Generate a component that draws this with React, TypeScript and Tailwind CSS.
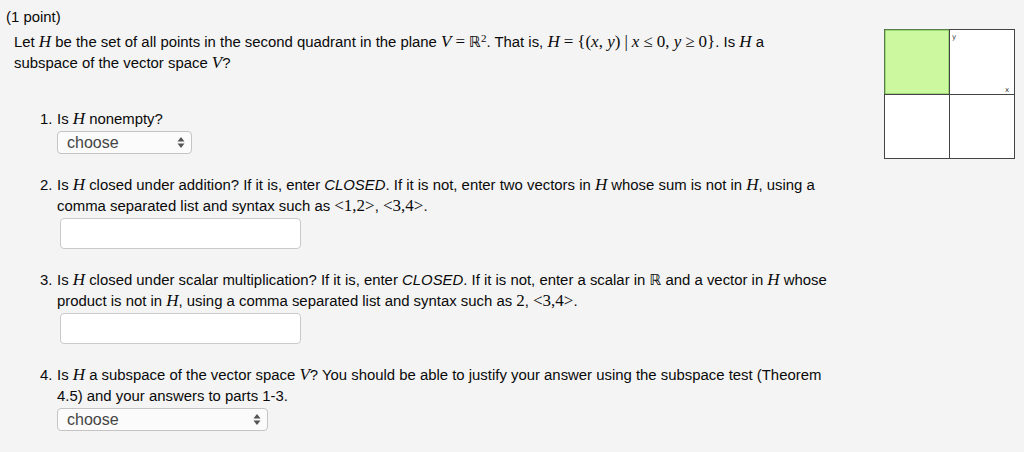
import { ReactNode } from 'react';

const M = ({ children }: { children: ReactNode }) => (
    <span className="font-['Liberation_Serif',serif] italic text-[17px] leading-none">{children}</span>
);

const R = ({ children }: { children: ReactNode }) => (
    <span className="font-['Liberation_Serif',serif] text-[17px] leading-none">{children}</span>
);

// relation symbols get a bit of room on both sides, as in typeset math
const Rel = ({ children }: { children: ReactNode }) => (
    <span className="font-['Liberation_Serif',serif] text-[17px] leading-none mx-[4px]">{children}</span>
);

const BB = () => <span className="font-['DejaVu_Sans',sans-serif] text-[15px] leading-none">ℝ</span>;

const Choose = ({ width }: { width: string }) => (
    <div className={`${width} h-[23px] mt-[1px] flex items-center justify-between pl-[9px] pr-[6px] bg-[#fbfbfb] border border-[#c4c4c4] rounded-[4px]`}>
        <span className="text-[16px] text-[#444] leading-none">choose</span>
        <svg width="8" height="13" viewBox="0 0 8 13">
            <path d="M4 1 L7.5 5.5 L0.5 5.5 Z" fill="#555" />
            <path d="M4 12 L7.5 7.5 L0.5 7.5 Z" fill="#555" />
        </svg>
    </div>
);

const Answer = () => (
    <div className="ml-[3px] mt-[1px] w-[241px] h-[31px] bg-white border border-[#cacaca] rounded-[4px]" />
);

const Item = ({ n, children }: { n: number; children: ReactNode }) => (
    <div className="flex">
        <span className="w-[17px] shrink-0">{n}.</span>
        <div className="flex flex-col">{children}</div>
    </div>
);

const Graph = () => (
    <svg width="131" height="131" viewBox="0 0 131 131" className="shrink-0">
        <rect x="0.5" y="0.5" width="130" height="129" fill="#fff" stroke="#444" />
        <rect x="1" y="1" width="64" height="64" fill="#ccf9a0" stroke="#6fb84f" />
        <line x1="65.5" y1="0" x2="65.5" y2="130" stroke="#444" />
        <line x1="0" y1="65.5" x2="131" y2="65.5" stroke="#444" />
        <text x="68" y="10" fontSize="7" fill="#333" fontFamily="DejaVu Sans">y</text>
        <text x="121" y="63" fontSize="7" fill="#333" fontFamily="DejaVu Sans">x</text>
    </svg>
);

export default function App() {
    return (
        <div className="w-[1024px] h-[452px] bg-[#f4f4f4] text-[#0a0a0a] font-['Liberation_Sans',Arial,sans-serif] text-[14.9px] leading-[21px] flex justify-between">
            <div className="pt-[7px] pl-[6px]">
                <div>(1 point)</div>
                <div className="pl-[8px] pt-[4px]">
                    <p>
                        Let <M>H</M> be the set of all points in the second quadrant in the plane <M>V</M><Rel>=</Rel><BB /><sup className="font-['Liberation_Serif',serif] text-[11px] leading-none">2</sup>. That is, <M>H</M><Rel>=</Rel><R>{'{'}(<i>x</i>, <i>y</i>)</R><Rel>|</Rel><R><i>x</i></R><Rel>≤</Rel><R>0, <i>y</i></R><Rel>≥</Rel><R>0{'}'}</R>. Is <M>H</M> a
                        <br />
                        subspace of the vector space <M>V</M>?
                    </p>
                    <div className="pl-[26px] pt-[35px] flex flex-col gap-[21px]">
                        <Item n={1}>
                            <div>Is <M>H</M> nonempty?</div>
                            <Choose width="w-[135px]" />
                        </Item>
                        <Item n={2}>
                            <div>
                                Is <M>H</M> closed under addition? If it is, enter <i>CLOSED</i>. If it is not, enter two vectors in <M>H</M> whose sum is not in <M>H</M>, using a
                                <br />
                                comma separated list and syntax such as <R>&lt;1,2&gt;</R>, <R>&lt;3,4&gt;</R>.
                            </div>
                            <Answer />
                        </Item>
                        <Item n={3}>
                            <div>
                                Is <M>H</M> closed under scalar multiplication? If it is, enter <i>CLOSED</i>. If it is not, enter a scalar in <BB /> and a vector in <M>H</M> whose
                                <br />
                                product is not in <M>H</M>, using a comma separated list and syntax such as <R>2</R>, <R>&lt;3,4&gt;</R>.
                            </div>
                            <Answer />
                        </Item>
                        <Item n={4}>
                            <div>
                                Is <M>H</M> a subspace of the vector space <M>V</M>? You should be able to justify your answer using the subspace test (Theorem
                                <br />
                                4.5) and your answers to parts 1-3.
                            </div>
                            <Choose width="w-[211px]" />
                        </Item>
                    </div>
                </div>
            </div>
            <div className="pt-[29px] pr-[9px]">
                <Graph />
            </div>
        </div>
    );
}
